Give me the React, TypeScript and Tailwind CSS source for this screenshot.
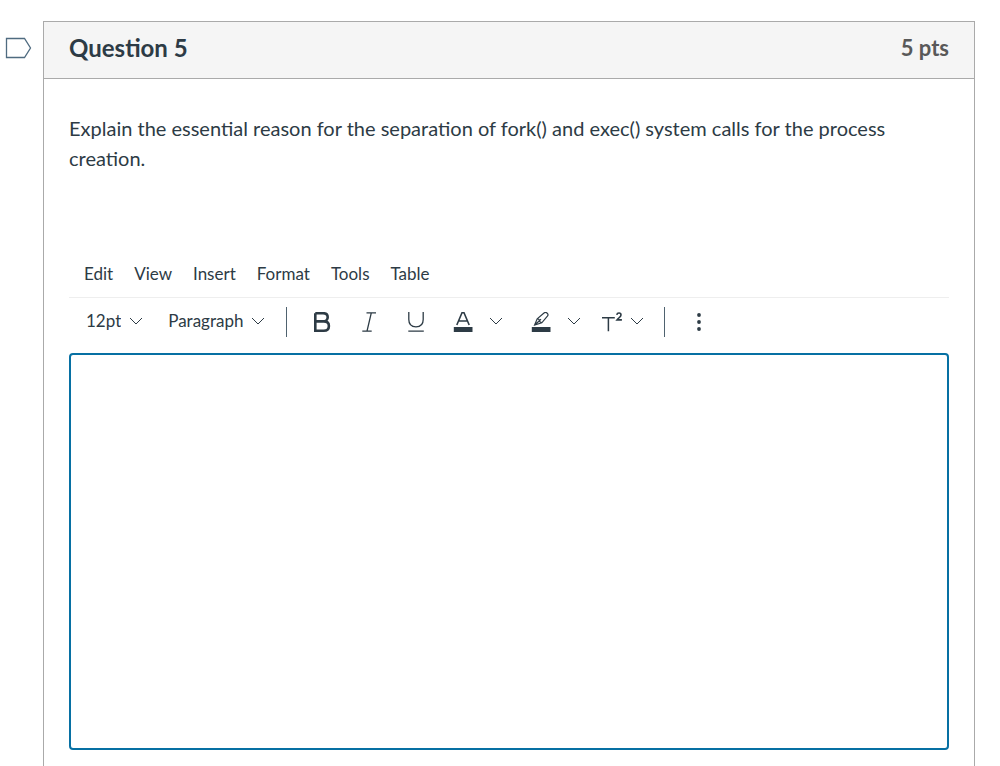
import React from "react";

const menus = ["Edit", "View", "Insert", "Format", "Tools", "Table"];

const Chevron = () => (
  <svg width="14" height="8" viewBox="0 0 14 8" fill="none" stroke="currentColor" strokeWidth="1">
    <path d="M1 1 L7 7 L13 1" />
  </svg>
);

type IconProps = { children: React.ReactNode };

const Icon = ({ children }: IconProps) => (
  <svg width="20" height="20" viewBox="0 0 20 20" fill="none" stroke="currentColor" strokeWidth="1.3">
    {children}
  </svg>
);

type ButtonProps = {
  label: string;
  className: string;
  children: React.ReactNode;
};

const ToolButton = ({ label, className, children }: ButtonProps) => (
  <button
    type="button"
    aria-label={label}
    className={`flex h-8 shrink-0 items-center justify-center ${className}`}
  >
    {children}
  </button>
);

type PickerProps = { label: string; options: string[] };

const Picker = ({ label, options }: PickerProps) => (
  <label className="relative flex h-8 items-center">
    <select
      aria-label={label}
      defaultValue={options[0]}
      className="field-sizing-content appearance-none bg-transparent pr-[22px] text-[17px] leading-6 outline-none"
    >
      {options.map((option) => (
        <option key={option}>{option}</option>
      ))}
    </select>
    <span className="pointer-events-none absolute right-0">
      <Chevron />
    </span>
  </label>
);

const Separator = () => <div className="h-[30px] w-px shrink-0 bg-[#4f626f]"></div>;

const Toolbar = () => (
  <div className="mb-[7px] flex h-12 items-center pl-[17px]">
    <div className="flex items-center gap-[25px] pb-0.5">
      <Picker label="Font size" options={["12pt", "8pt", "10pt", "14pt", "18pt", "24pt"]} />
      <Picker label="Block style" options={["Paragraph", "Heading", "Quote"]} />
    </div>
    <div className="flex items-center pr-[11px] pl-[21px]">
      <Separator />
    </div>
    <ToolButton label="Bold" className="w-[47px]">
      <Icon>
        <path
          d="M3.3 1.2 H11 C14 1.2 15.7 2.9 15.7 5.2 C15.7 7.7 14 9.4 11 9.4 H3.3 M11 9.4 H11.8 C15.2 9.4 16.9 11.3 16.9 13.9 C16.9 16.8 15.2 18.7 11.8 18.7 H3.3 V1.2"
          strokeWidth="2.6"
        />
      </Icon>
    </ToolButton>
    <ToolButton label="Italic" className="w-[47px]">
      <Icon>
        <path d="M7.5 0.8 H17 M3.3 19.2 H12.7 M12.3 0.8 L8 19.2" />
      </Icon>
    </ToolButton>
    <ToolButton label="Underline" className="w-[47px]">
      <Icon>
        <path d="M2.8 0 V7.5 C2.8 12.2 5.4 14.8 10 14.8 C14.6 14.8 17.2 12.2 17.2 7.5 V0 M2.3 19.2 H17.8" />
      </Icon>
    </ToolButton>
    <ToolButton label="Text color" className="w-[47px]">
      <Icon>
        <path d="M3.8 13 L9 0.8 H11 L16.2 13 M5.6 9 H14.4" strokeWidth="1.6" />
        <path d="M0.8 15 H19.5 V20 H0.8 Z" fill="currentColor" stroke="none" />
      </Icon>
    </ToolButton>
    <ToolButton label="Text color options" className="w-5 pb-0.5">
      <Chevron />
    </ToolButton>
    <ToolButton label="Highlight color" className="ml-[11px] w-[47px]">
      <Icon>
        <path
          d="M3.6 13 L6.2 6.8 L13 1 C14 0.2 15.3 0.4 16.2 1.2 C17.1 2 17.2 3.2 16.4 4.2 L10.8 10.8 L3.6 13 Z M6.2 6.8 L8 7.4 L8.6 9.6 L10.8 10.8 M3.8 12.8 L8.2 9 L10 7.2"
          strokeWidth="1.2"
        />
        <path d="M0.8 15 H19.5 V20 H0.8 Z" fill="currentColor" stroke="none" />
      </Icon>
    </ToolButton>
    <ToolButton label="Highlight color options" className="w-5 pb-0.5">
      <Chevron />
    </ToolButton>
    <ToolButton label="Superscript" className="ml-[13px] w-[30px]">
      <Icon>
        <path d="M0 5.7 H12.8 M6.4 5.7 V19.2" strokeWidth="1.5" />
        <path d="M14.8 2.8 C15.2 0.4 19 0.5 19 2.9 C19 4.7 16.6 5.9 15 7.9 H19.9" strokeWidth="1.6" />
      </Icon>
    </ToolButton>
    <ToolButton label="Superscript options" className="w-5 pb-0.5">
      <Chevron />
    </ToolButton>
    <div className="flex items-center pr-[10px] pl-[17px]">
      <Separator />
    </div>
    <ToolButton label="More" className="w-[47px]">
      <Icon>
        <g fill="currentColor" stroke="none">
          <circle cx="10" cy="3" r="1.9" />
          <circle cx="10" cy="10" r="1.9" />
          <circle cx="10" cy="17" r="1.9" />
        </g>
      </Icon>
    </ToolButton>
  </div>
);

const App = () => {
  return (
    <main className="flex min-h-screen bg-white pt-[21px] pr-[25px] font-['Lato',sans-serif] text-[#2d3b45]">
      <div className="w-[43px] shrink-0 pt-4 pl-[5px]">
        <button type="button" aria-label="Flag question" className="block text-[#4f6b80]">
          <svg width="27" height="22" viewBox="0 0 27 22" fill="none" stroke="currentColor" strokeWidth="1.3">
            <path d="M1.5 1.5 H19.5 L25.5 11 L19.5 20.5 H1.5 Z" />
          </svg>
        </button>
      </div>
      <section className="min-w-0 grow border border-b-0 border-[#aaaaaa]">
        <header className="flex h-[57px] items-center justify-between border-b border-[#aaaaaa] bg-[#f5f5f5] px-[25px] pb-1 font-bold">
          <h1 className="text-2xl">Question 5</h1>
          <p className="text-[22px] leading-8 text-[#595959]">5 pts</p>
        </header>
        <div className="px-[25px] pt-[34px] pb-6">
          <p className="text-xl leading-[30px]">
            Explain the essential reason for the separation of fork() and exec() system calls for the
            process creation.
          </p>
          <div className="mt-[77px]">
            <div className="flex h-12 items-center gap-[21px] border-b border-[#eeeeee] pl-[15px]">
              {menus.map((menu) => (
                <button key={menu} type="button" className="text-[17px] leading-6">
                  {menu}
                </button>
              ))}
            </div>
            <Toolbar />
            <textarea
              aria-label="Answer"
              className="block h-[397px] w-full resize-none rounded border-2 border-[#0770a3] p-3 text-xl outline-none"
            />
          </div>
        </div>
      </section>
    </main>
  );
};

export default App;
